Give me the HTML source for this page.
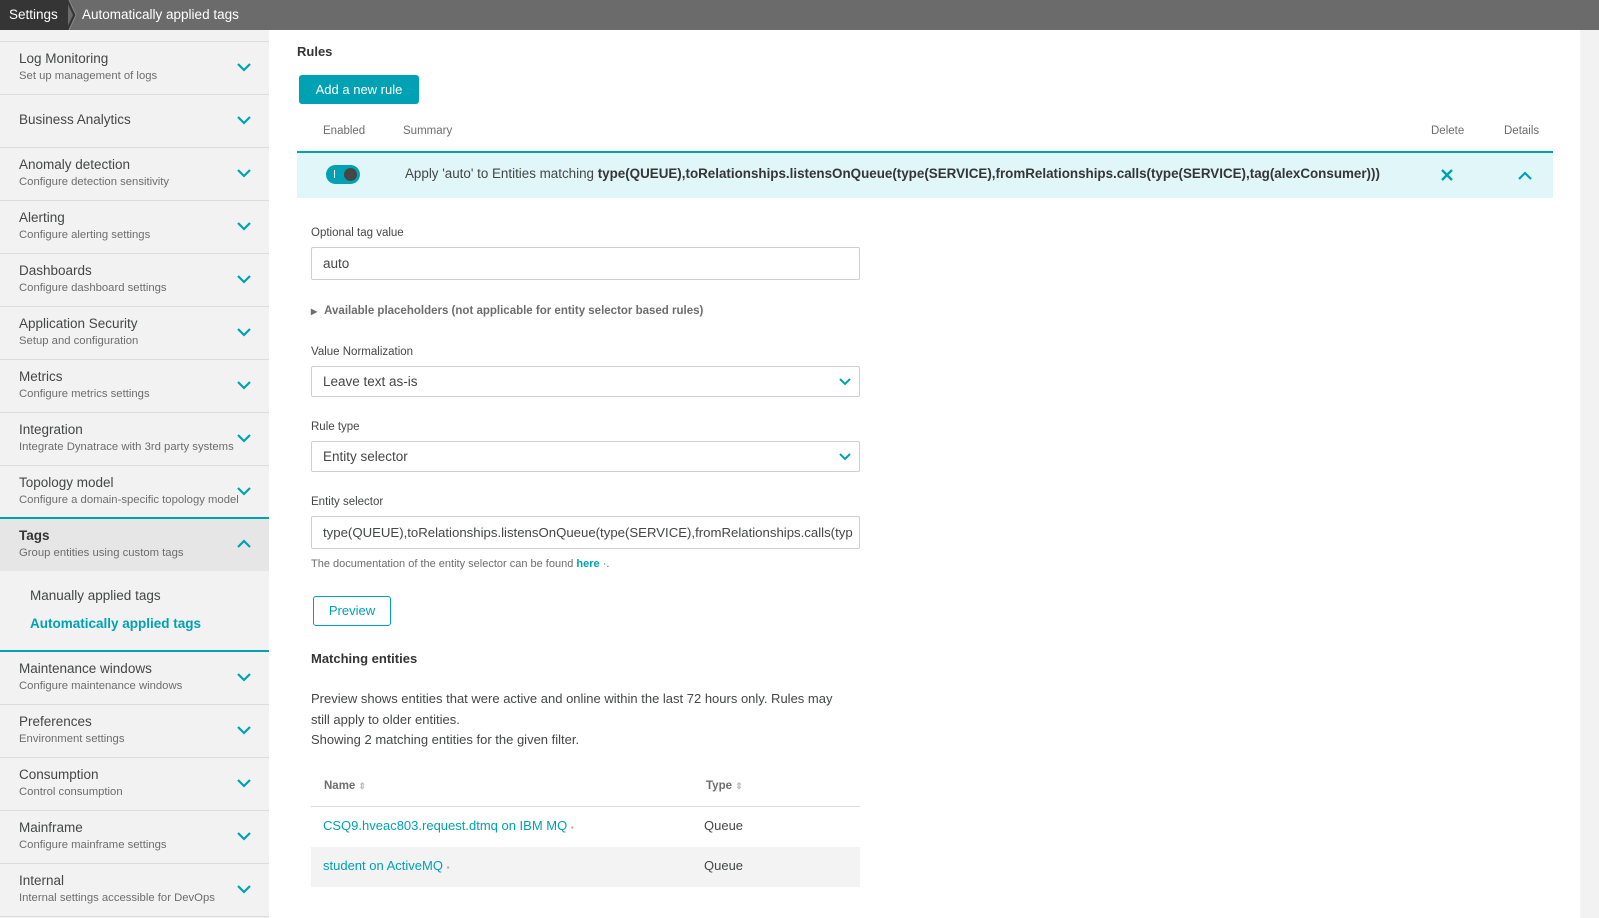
<!DOCTYPE html>
<html><head><meta charset="utf-8"><style>
*{box-sizing:border-box;margin:0;padding:0}
body{width:1599px;height:918px;overflow:hidden;background:#fff;font-family:"Liberation Sans",sans-serif;color:#454646;position:relative}
.a{position:absolute;white-space:nowrap}
.hdr{left:0;top:0;width:1599px;height:30px;background:#6b6b6b}
.crumb1{left:0;top:0;width:68px;height:30px;background:#353535;color:#fff;font-size:13.5px;line-height:30px;padding-left:9px}
.side{left:0;top:30px;width:269px;height:888px;background:#f2f2f2}
.item{position:absolute;left:0;width:269px;height:53px;border-bottom:1px solid #dcdcdc}
.item .t{position:absolute;left:19px;top:9px;font-size:13.5px;color:#454646}
.item .s{position:absolute;left:19px;top:28px;font-size:11.3px;color:#6d6d6d}
.item.one .t{top:17px}
.chev{position:absolute;left:237px;top:20px}
.lbl{font-size:11.5px;color:#454646}
.inp{position:absolute;left:311px;width:549px;height:32px;border:1px solid #cfcfcf;border-radius:2px;font-size:13.5px;line-height:30px;padding-left:11px;color:#454646;overflow:hidden;white-space:nowrap}
.teal{color:#00a1b2}
</style></head><body>
<div class="a hdr"></div>
<div class="a crumb1">Settings</div>
<svg class="a" style="left:66px;top:0" width="12" height="30"><polygon points="0,0 3,0 10,15 3,30 0,30 7,15" fill="#353535"/><polyline points="3,0 10,15 3,30" fill="none" stroke="#8a8a8a" stroke-width="1"/></svg>
<div class="a" style="left:82px;top:0;line-height:30px;color:#fff;font-size:13.5px">Automatically applied tags</div>
<div class="a" style="left:1580px;top:30px;width:19px;height:888px;background:#f2f2f2"></div>

<div class="a side"></div>
<div class="a" style="left:0;top:41px;width:269px;height:1px;background:#dcdcdc"></div>
<div class="item" style="top:42px"><div class="t">Log Monitoring</div><div class="s">Set up management of logs</div><svg class="chev" width="14" height="10"><polyline points="1,2 7,8 13,2" fill="none" stroke="#00a1b2" stroke-width="2.2"/></svg></div>
<div class="item one" style="top:95px"><div class="t">Business Analytics</div><svg class="chev" width="14" height="10"><polyline points="1,2 7,8 13,2" fill="none" stroke="#00a1b2" stroke-width="2.2"/></svg></div>
<div class="item" style="top:148px"><div class="t">Anomaly detection</div><div class="s">Configure detection sensitivity</div><svg class="chev" width="14" height="10"><polyline points="1,2 7,8 13,2" fill="none" stroke="#00a1b2" stroke-width="2.2"/></svg></div>
<div class="item" style="top:201px"><div class="t">Alerting</div><div class="s">Configure alerting settings</div><svg class="chev" width="14" height="10"><polyline points="1,2 7,8 13,2" fill="none" stroke="#00a1b2" stroke-width="2.2"/></svg></div>
<div class="item" style="top:254px"><div class="t">Dashboards</div><div class="s">Configure dashboard settings</div><svg class="chev" width="14" height="10"><polyline points="1,2 7,8 13,2" fill="none" stroke="#00a1b2" stroke-width="2.2"/></svg></div>
<div class="item" style="top:307px"><div class="t">Application Security</div><div class="s">Setup and configuration</div><svg class="chev" width="14" height="10"><polyline points="1,2 7,8 13,2" fill="none" stroke="#00a1b2" stroke-width="2.2"/></svg></div>
<div class="item" style="top:360px"><div class="t">Metrics</div><div class="s">Configure metrics settings</div><svg class="chev" width="14" height="10"><polyline points="1,2 7,8 13,2" fill="none" stroke="#00a1b2" stroke-width="2.2"/></svg></div>
<div class="item" style="top:413px"><div class="t">Integration</div><div class="s">Integrate Dynatrace with 3rd party systems</div><svg class="chev" width="14" height="10"><polyline points="1,2 7,8 13,2" fill="none" stroke="#00a1b2" stroke-width="2.2"/></svg></div>
<div class="item" style="top:466px;border-bottom:none"><div class="t">Topology model</div><div class="s">Configure a domain-specific topology model</div><svg class="chev" width="14" height="10"><polyline points="1,2 7,8 13,2" fill="none" stroke="#00a1b2" stroke-width="2.2"/></svg></div>
<div class="a" style="left:0;top:517px;width:269px;height:2px;background:#00a1b2"></div>
<div class="item" style="top:519px;height:52px;background:#e6e6e6;border-bottom:none"><div class="t" style="font-weight:bold;color:#353535">Tags</div><div class="s">Group entities using custom tags</div><svg class="chev" width="14" height="10"><polyline points="1,8 7,2 13,8" fill="none" stroke="#00a1b2" stroke-width="2.2"/></svg></div>
<div class="a" style="left:30px;top:588px;font-size:13.5px;color:#454646">Manually applied tags</div>
<div class="a" style="left:30px;top:616px;font-size:13.5px;font-weight:bold;color:#00a1b2">Automatically applied tags</div>
<div class="a" style="left:0;top:650px;width:269px;height:2px;background:#00a1b2"></div>
<div class="item" style="top:652px"><div class="t">Maintenance windows</div><div class="s">Configure maintenance windows</div><svg class="chev" width="14" height="10"><polyline points="1,2 7,8 13,2" fill="none" stroke="#00a1b2" stroke-width="2.2"/></svg></div>
<div class="item" style="top:705px"><div class="t">Preferences</div><div class="s">Environment settings</div><svg class="chev" width="14" height="10"><polyline points="1,2 7,8 13,2" fill="none" stroke="#00a1b2" stroke-width="2.2"/></svg></div>
<div class="item" style="top:758px"><div class="t">Consumption</div><div class="s">Control consumption</div><svg class="chev" width="14" height="10"><polyline points="1,2 7,8 13,2" fill="none" stroke="#00a1b2" stroke-width="2.2"/></svg></div>
<div class="item" style="top:811px"><div class="t">Mainframe</div><div class="s">Configure mainframe settings</div><svg class="chev" width="14" height="10"><polyline points="1,2 7,8 13,2" fill="none" stroke="#00a1b2" stroke-width="2.2"/></svg></div>
<div class="item" style="top:864px"><div class="t">Internal</div><div class="s">Internal settings accessible for DevOps</div><svg class="chev" width="14" height="10"><polyline points="1,2 7,8 13,2" fill="none" stroke="#00a1b2" stroke-width="2.2"/></svg></div>

<div class="a" style="left:297px;top:44px;font-size:13px;font-weight:bold;color:#353535">Rules</div>
<div class="a" style="left:299px;top:75px;width:120px;height:29px;background:#00a1b2;border-radius:3px;color:#fff;font-size:13px;line-height:29px;text-align:center">Add a new rule</div>
<div class="a" style="left:323px;top:125px;font-size:11.5px;color:#6d6d6d">Enabled</div>
<div class="a" style="left:403px;top:125px;font-size:11.5px;color:#6d6d6d">Summary</div>
<div class="a" style="left:1431px;top:125px;font-size:11.5px;color:#6d6d6d">Delete</div>
<div class="a" style="left:1504px;top:125px;font-size:11.5px;color:#6d6d6d">Details</div>
<div class="a" style="left:297px;top:151px;width:1256px;height:47px;background:#e1f6f9;border-top:2px solid #00a1b2"></div>
<div class="a" style="left:326px;top:165px;width:34px;height:19px;border-radius:10px;background:#00a1b2"></div>
<div class="a" style="left:334px;top:170px;width:1px;height:8px;background:#fff"></div>
<div class="a" style="left:344px;top:168px;width:13px;height:13px;border-radius:50%;background:#454646"></div>
<div class="a" style="left:405px;top:166px;font-size:13.4px;color:#454646">Apply 'auto' to Entities matching <b style="color:#353535">type(QUEUE),toRelationships.listensOnQueue(type(SERVICE),fromRelationships.calls(type(SERVICE),tag(alexConsumer)))</b></div>
<svg class="a" style="left:1441px;top:169px" width="12" height="12"><path d="M1 1L11 11M11 1L1 11" stroke="#00a1b2" stroke-width="2.4"/></svg>
<svg class="a" style="left:1518px;top:171px" width="14" height="9"><polyline points="1,8 7,2 13,8" fill="none" stroke="#00a1b2" stroke-width="2.2"/></svg>

<div class="a lbl" style="left:311px;top:227px">Optional tag value</div>
<div class="inp" style="top:247px;height:33px;line-height:31px">auto</div>
<div class="a" style="left:311px;top:305px;font-size:11.5px;color:#6d6d6d;font-weight:bold"><span style="font-size:8px;margin-right:7px">▶</span>Available placeholders (not applicable for entity selector based rules)</div>
<div class="a lbl" style="left:311px;top:346px">Value Normalization</div>
<div class="inp" style="top:366px;height:31px;line-height:29px">Leave text as-is<svg style="position:absolute;right:8px;top:11px" width="12" height="8"><polyline points="1,1 6,6 11,1" fill="none" stroke="#00a1b2" stroke-width="2"/></svg></div>
<div class="a lbl" style="left:311px;top:421px">Rule type</div>
<div class="inp" style="top:441px;height:31px;line-height:29px">Entity selector<svg style="position:absolute;right:8px;top:11px" width="12" height="8"><polyline points="1,1 6,6 11,1" fill="none" stroke="#00a1b2" stroke-width="2"/></svg></div>
<div class="a lbl" style="left:311px;top:496px">Entity selector</div>
<div class="inp" style="top:516px;height:33px;line-height:31px;font-size:13.2px">type(QUEUE),toRelationships.listensOnQueue(type(SERVICE),fromRelationships.calls(typ</div>
<div class="a" style="left:311px;top:558px;font-size:11px;color:#6d6d6d">The documentation of the entity selector can be found <b class="teal">here</b> ·.</div>
<div class="a" style="left:313px;top:596px;width:78px;height:30px;border:1px solid #00a1b2;border-radius:3px;color:#00a1b2;font-size:13px;line-height:28px;text-align:center">Preview</div>
<div class="a" style="left:311px;top:651px;font-size:13px;font-weight:bold;color:#353535">Matching entities</div>
<div class="a" style="left:311px;top:689px;font-size:13px;line-height:20.5px;color:#454646">Preview shows entities that were active and online within the last 72 hours only. Rules may<br>still apply to older entities.<br>Showing 2 matching entities for the given filter.</div>
<div class="a" style="left:324px;top:780px;font-size:11.5px;font-weight:bold;color:#6d6d6d">Name <span style="color:#bbb;font-size:9px">⇕</span></div>
<div class="a" style="left:706px;top:780px;font-size:11.5px;font-weight:bold;color:#6d6d6d">Type <span style="color:#bbb;font-size:9px">⇕</span></div>
<div class="a" style="left:311px;top:806px;width:549px;height:1px;background:#dcdcdc"></div>
<div class="a" style="left:323px;top:818px;font-size:13px;color:#00a1b2">CSQ9.hveac803.request.dtmq on IBM MQ <span style="font-size:8px;color:#aaa">▪</span></div>
<div class="a" style="left:704px;top:818px;font-size:13px;color:#454646">Queue</div>
<div class="a" style="left:311px;top:847px;width:549px;height:40px;background:#f3f3f3"></div>
<div class="a" style="left:323px;top:858px;font-size:13px;color:#00a1b2">student on ActiveMQ <span style="font-size:8px;color:#aaa">▪</span></div>
<div class="a" style="left:704px;top:858px;font-size:13px;color:#454646">Queue</div>
</body></html>
